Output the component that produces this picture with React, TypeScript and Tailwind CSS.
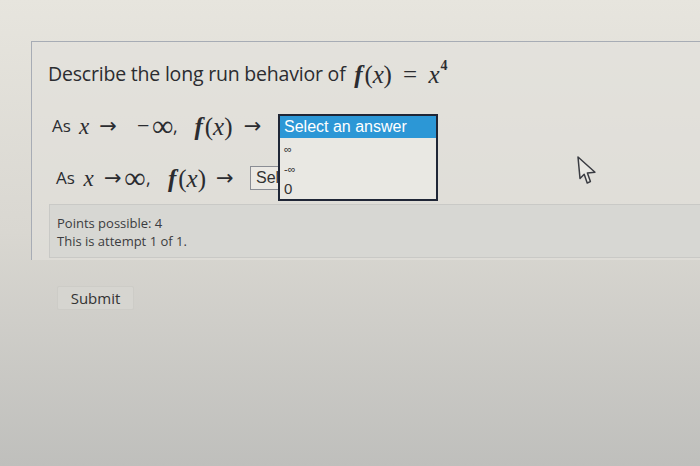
import React from 'react';

const serif = "font-['Liberation_Serif','DejaVu_Serif',serif]";
const arrow = "font-['DejaVu_Sans',sans-serif] text-[21px] leading-none text-center";
const infinity = "font-['Liberation_Serif',serif] text-[30px] leading-none text-center";

function Fx({ w }: { w: string }) {
  return (
    <span className={`${serif} ${w} flex justify-center whitespace-nowrap text-[25px] leading-none`}>
      <span className="italic font-semibold">f</span>
      <span className="ml-[2px]">(</span>
      <span className="italic">x</span>
      <span>)</span>
    </span>
  );
}

function Cursor() {
  return (
    <svg width="34" height="40" viewBox="0 0 34 40" className="absolute left-[570px] top-[150px]">
      <path
        d="M8 7 L10 28.5 L14.2 24.2 L17.2 33 L20.4 31.6 L17.4 23 L25 22.2 Z"
        fill="#e9e8e3"
        stroke="#3a3c42"
        strokeWidth="1.5"
        strokeLinejoin="round"
      />
    </svg>
  );
}

export default function App() {
  return (
    <div className="relative h-[466px] w-[700px] overflow-hidden bg-linear-to-b from-[#e7e5de] via-[#d9d7d1] to-[#bfbfbc] font-['Open_Sans',sans-serif] text-[#2b2c30]">
      <div className="pl-[31px] pt-[41px]">
        <div className="border-l border-t border-[#a7acb5] bg-[#e2e1dc]/60 pb-[2px] pl-[16px] pt-[17px]">
          <div className="flex h-[30px] items-center text-[19.5px] tracking-[-0.2px]">
            <span>Describe the long run behavior of</span>
            <span className={`${serif} ml-[8px] flex items-center text-[25px] leading-none`}>
              <Fx w="w-[39px]" />
              <span className="ml-[8px] w-[19px] text-center not-italic">=</span>
              <span className="ml-[9px] italic">x</span>
              <span className="relative -top-[8px] ml-[1px] text-[14px] font-bold">4</span>
            </span>
          </div>

          <div className="mt-[24px] flex h-[26px] items-center pl-[4px] text-[17px]">
            <span className="w-[21px]">As</span>
            <span className={`${serif} ml-[5px] w-[12px] text-center text-[23px] italic leading-none`}>x</span>
            <span className={`${arrow} ml-[8px] w-[20px]`}>→</span>
            <span className={`${serif} ml-[19px] w-[11px] text-center text-[22px] leading-none`}>−</span>
            <span className={`${infinity} ml-[4px] w-[21px]`}>∞</span>
            <span className="w-[5px] text-[18px]">,</span>
            <span className="ml-[15px]"><Fx w="w-[41px]" /></span>
            <span className={`${arrow} ml-[9px] w-[19px]`}>→</span>
            <div className="relative ml-[16px]">
              <div className="flex h-[24px] w-[160px] items-center border-2 border-b-0 border-[#1f2636] bg-[#2c97d6] pl-[4px] font-['Liberation_Sans',sans-serif] text-[16px] text-white">
                Select an answer
              </div>
              <div className="absolute left-0 top-[24px] z-10 flex h-[63px] w-[160px] flex-col border-2 border-t-0 border-[#1f2636] bg-[#e9e8e3] pl-[4px] font-['Liberation_Sans',sans-serif] text-[#333]">
                <span className="mt-[6px] text-[11px] leading-none">∞</span>
                <span className="mt-[9px] text-[11px] leading-none">-∞</span>
                <span className="mt-[6px] text-[15px] leading-none">0</span>
              </div>
            </div>
          </div>

          <div className="mt-[27px] flex h-[24px] items-center pl-[8px] text-[17px]">
            <span className="w-[21px]">As</span>
            <span className={`${serif} ml-[5px] w-[13px] text-center text-[23px] italic leading-none`}>x</span>
            <span className={`${arrow} ml-[9px] w-[17px]`}>→</span>
            <span className={`${infinity} ml-[3px] w-[22px]`}>∞</span>
            <span className="w-[5px] text-[18px]">,</span>
            <span className="ml-[15px]"><Fx w="w-[42px]" /></span>
            <span className={`${arrow} ml-[8px] w-[17px]`}>→</span>
            <div className="ml-[17px] flex h-[24px] w-[40px] items-center border border-[#8a8d94] bg-[#ebe9e4] pl-[5px] font-['Liberation_Sans',sans-serif] text-[16px] text-[#333]">
              Sel
            </div>
          </div>

          <div className="mt-[14px] ml-[1px] border-t border-b border-l border-[#c9c9c6] bg-[#d7d7d3] pb-[7px] pl-[7px] pt-[9px] text-[13px] leading-[18px] text-[#3b3c40]">
            <div>Points possible: 4</div>
            <div>This is attempt 1 of 1.</div>
          </div>
        </div>

        <div className="ml-[26px] mt-[26px] flex h-[24px] w-[77px] items-center justify-center rounded-[2px] border border-[#cdccc7] bg-[#d6d5d0] text-[15px] text-[#333]">
          Submit
        </div>
      </div>
      <Cursor />
    </div>
  );
}
